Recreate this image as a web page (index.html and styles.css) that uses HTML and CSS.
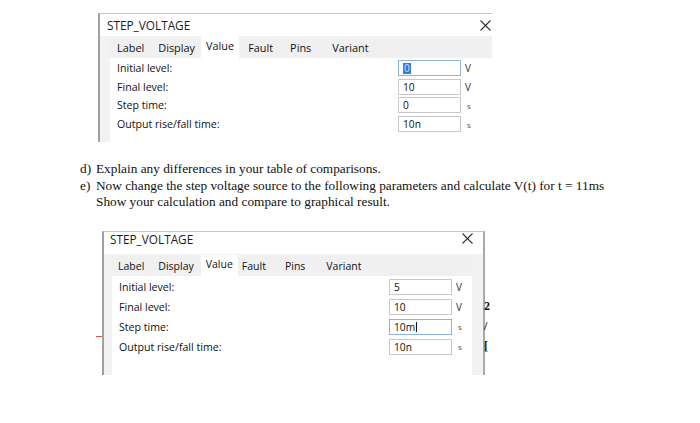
FILE: index.html
```html
<!DOCTYPE html>
<html>
<head>
<meta charset="utf-8">
<link rel="stylesheet" href="styles.css">
</head>
<body>
<div class="page">
  <div class="dlg dlg-top">
    <div class="title-row"><span class="title">STEP_VOLTAGE</span><svg class="close" width="11" height="11" viewBox="0 0 11 11"><path d="M0.5 0.5 L10.5 10.5 M10.5 0.5 L0.5 10.5" stroke="#333" stroke-width="1.1" fill="none"/></svg></div>
    <div class="frame">
      <div class="tabs">
        <span class="tab t1">Label</span>
        <span class="tab t2">Display</span>
        <span class="tab t3 active">Value</span>
        <span class="tab t4">Fault</span>
        <span class="tab t5">Pins</span>
        <span class="tab t6">Variant</span>
      </div>
      <div class="panel">
        <div class="row"><span class="lbl">Initial level:</span><span class="inp focus"><span class="sel">0</span></span><span class="unit">V</span></div>
        <div class="row"><span class="lbl">Final level:</span><span class="inp">10</span><span class="unit">V</span></div>
        <div class="row"><span class="lbl">Step time:</span><span class="inp">0</span><span class="unit s">s</span></div>
        <div class="row"><span class="lbl">Output rise/fall time:</span><span class="inp">10n</span><span class="unit s">s</span></div>
      </div>
    </div>
  </div>

  <div class="question">
    <div class="q"><span class="qn">d)</span><span>Explain any differences in your table of comparisons.</span></div>
    <div class="q"><span class="qn">e)</span><span>Now change the step voltage source to the following parameters and calculate V(t) for t = 11ms<br>Show your calculation and compare to graphical result.</span></div>
  </div>

  <div class="dlg-wrap">
    <span class="redtick"></span>
    <div class="dlg dlg-bottom">
      <div class="title-row"><span class="title">STEP_VOLTAGE</span><svg class="close" width="11" height="11" viewBox="0 0 11 11"><path d="M0.5 0.5 L10.5 10.5 M10.5 0.5 L0.5 10.5" stroke="#333" stroke-width="1.1" fill="none"/></svg></div>
      <div class="frame">
        <div class="tabs">
          <span class="tab t1">Label</span>
          <span class="tab t2">Display</span>
          <span class="tab t3 active">Value</span>
          <span class="tab t4">Fault</span>
          <span class="tab t5">Pins</span>
          <span class="tab t6">Variant</span>
        </div>
        <div class="panel">
          <div class="row"><span class="lbl">Initial level:</span><span class="inp">5</span><span class="unit">V</span></div>
          <div class="row"><span class="lbl">Final level:</span><span class="inp">10</span><span class="unit">V</span></div>
          <div class="row"><span class="lbl">Step time:</span><span class="inp focus">10m<span class="caret"></span></span><span class="unit s">s</span></div>
          <div class="row"><span class="lbl">Output rise/fall time:</span><span class="inp">10n</span><span class="unit s">s</span></div>
        </div>
      </div>
    </div>
    <div class="behind"><span>2</span><span>/</span><span>[</span></div>
  </div>
</div>
</body>
</html>
```

FILE: styles.css
```css
html, body {
  margin: 0;
  padding: 0;
  background: #ffffff;
}
.page {
  width: 700px;
  height: 423px;
  overflow: hidden;
  font-family: "Open Sans", "Noto Sans", sans-serif;
  color: #111;
}
.dlg {
  background: #ffffff;
}
.dlg-top {
  margin-left: 98px;
  margin-top: 13px;
  width: 392px;
  border-top: 1px solid #c4c4c4;
  border-left: 2px solid #a0a0a0;
}
.title-row {
  height: 22px;
  display: flex;
  align-items: center;
  justify-content: space-between;
  padding-left: 7px;
  padding-right: 1px;
}
.title {
  font-size: 11.8px;
  color: #1a1a1a;
}
.close {
  display: block;
}
.frame {
  background: #f2f2f2;
  padding-left: 10px;
  padding-top: 2px;
}
.tabs {
  display: flex;
  align-items: flex-end;
  height: 20px;
  background: #f0f0f0;
  font-size: 10.9px;
}
.tab {
  padding: 0 0 3px 0;
  color: #111;
}
.tab.active {
  background: #ffffff;
  padding: 2px 5px 6px 5px;
  margin-bottom: -1px;
}
.dlg-top .t1 { margin-left: 7px; }
.dlg-top .t2 { margin-left: 14px; }
.dlg-top .t3 { margin-left: 6px; }
.dlg-top .t4 { margin-left: 9px; }
.dlg-top .t5 { margin-left: 17px; }
.dlg-top .t6 { margin-left: 21px; }
.panel {
  background: #ffffff;
  padding: 2px 0 10px 7px;
  display: flex;
  flex-direction: column;
  gap: 2.7px;
  font-size: 10.6px;
}
.row {
  display: flex;
  align-items: center;
  height: 16px;
}
.lbl {
  width: 281px;
}
.inp {
  box-sizing: border-box;
  width: 63px;
  height: 16px;
  border: 1px solid #c8c8c8;
  padding-left: 4px;
  display: flex;
  align-items: center;
  font-size: 10.2px;
  background: #fff;
}
.inp.focus {
  border-color: #8fb4dc;
}
.sel {
  background: #3b78d0;
  color: #cfe0ff;
  padding: 0 1px;
  line-height: 11px;
}
.caret {
  display: inline-block;
  width: 1px;
  height: 10px;
  background: #111;
  margin-left: 1px;
}
.unit {
  margin-left: 4px;
  font-size: 10px;
  color: #333;
}
.unit.s {
  font-size: 8px;
  margin-left: 6px;
  color: #555;
}

.question {
  margin-top: 19px;
  margin-left: 80px;
  font-family: "Liberation Serif", "Times New Roman", serif;
  font-size: 13.3px;
  line-height: 16.5px;
  color: #111;
}
.q {
  display: flex;
}
.qn {
  width: 16px;
  flex: none;
}

.dlg-wrap {
  margin-top: 20px;
  margin-left: 96px;
  display: flex;
  align-items: flex-start;
  position: relative;
}
.redtick {
  position: absolute;
  left: 0;
  top: 105px;
  width: 6px;
  height: 1px;
  background: #d05050;
}
.dlg-bottom {
  margin-left: 6px;
  width: 379px;
  height: 143px;
  border-top: 1px solid #c4c4c4;
  border-left: 2px solid #a0a0a0;
  border-right: 2px solid #a8a8a8;
  display: flex;
  flex-direction: column;
}
.dlg-bottom .title-row {
  height: 14px;
  margin-bottom: 8px;
  padding-left: 6px;
  padding-right: 10px;
}
.dlg-bottom .frame {
  flex: 1;
  padding-left: 8px;
  padding-right: 11px;
  display: flex;
  flex-direction: column;
}
.dlg-bottom .tabs {
  font-size: 10.5px;
}
.dlg-bottom .t1 { margin-left: 6px; }
.dlg-bottom .t2 { margin-left: 14px; }
.dlg-bottom .t3 { margin-left: 7px; }
.dlg-bottom .t4 { margin-left: 4px; }
.dlg-bottom .t5 { margin-left: 19px; }
.dlg-bottom .t6 { margin-left: 21px; }
.dlg-bottom .panel {
  flex: 1;
  gap: 4px;
  padding-top: 3px;
}
.dlg-bottom .lbl {
  width: 270px;
}
.behind {
  display: flex;
  flex-direction: column;
  margin-top: 68px;
  margin-left: -1px;
  gap: 6px;
  font-family: "Liberation Serif", serif;
  font-size: 12px;
  font-weight: bold;
  line-height: 14px;
  color: #111;
}
```
